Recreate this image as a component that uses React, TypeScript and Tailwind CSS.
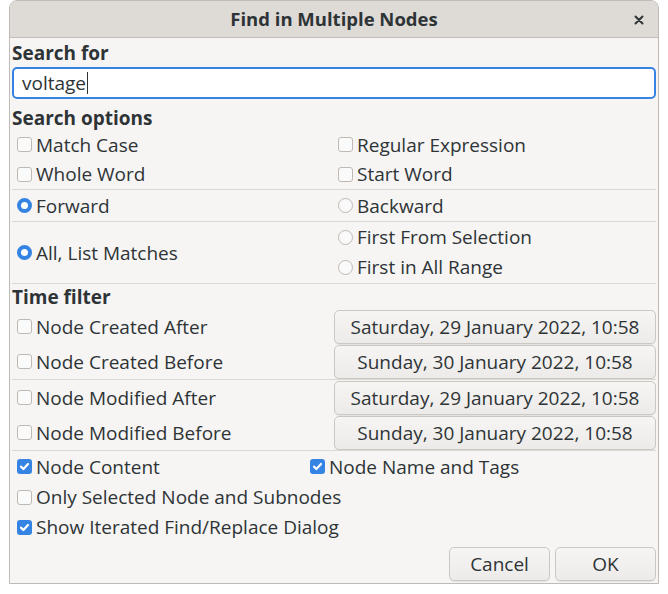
import React from 'react';

const font = { fontFamily: "'Open Sans', 'Noto Sans', sans-serif" };

function Check({ checked = false }: { checked?: boolean }) {
  if (checked) {
    return (
      <span className="flex h-[15px] w-[15px] shrink-0 items-center justify-center rounded-[3px] bg-[#3584e4]">
        <svg width="11" height="11" viewBox="0 0 11 11">
          <path d="M2 5.6 L4.4 8 L9 3" fill="none" stroke="white" strokeWidth="2.2" strokeLinecap="round" strokeLinejoin="round" />
        </svg>
      </span>
    );
  }
  return <span className="h-[15px] w-[15px] shrink-0 rounded-[3px] border border-[#bfb9b3] bg-[#fafafa]" />;
}

function Radio({ checked = false }: { checked?: boolean }) {
  if (checked) {
    return <span className="h-[15px] w-[15px] shrink-0 rounded-full border-[4px] border-[#3584e4] bg-white" />;
  }
  return <span className="h-[15px] w-[15px] shrink-0 rounded-full border border-[#bfb9b3] bg-[#fafafa]" />;
}

function Opt({ label, checked, radio }: { label: string; checked?: boolean; radio?: boolean }) {
  return (
    <div className="flex items-center gap-[4px]">
      {radio ? <Radio checked={checked} /> : <Check checked={checked} />}
      <span>{label}</span>
    </div>
  );
}

function Sep() {
  return <div className="h-px bg-[#dcd8d4]" />;
}

function DateBtn({ text }: { text: string }) {
  return (
    <button className="h-[34px] w-full rounded-[5px] border border-[#cdc7c2] bg-gradient-to-b from-[#f6f5f4] to-[#edebe9] text-[#2e3436] shadow-[0_1px_0_rgba(0,0,0,0.07)]">
      {text}
    </button>
  );
}

export default function App() {
  return (
    <div className="min-h-screen bg-white pl-[9px]" style={font}>
      <div className="flex h-[584px] w-[650px] flex-col overflow-hidden rounded-t-[8px] border border-[#c0bbb6] bg-[#f6f5f4] text-[19px] leading-[24px] text-[#2e3436]">
        {/* Title bar */}
        <div className="relative flex h-[37px] shrink-0 items-center justify-center border-b border-[#c3beb9] bg-[#dedbd7]">
          <span className="text-[18.5px] font-bold">Find in Multiple Nodes</span>
          <svg className="absolute right-[14px] top-[14px]" width="10" height="10" viewBox="0 0 10 10">
            <path d="M1.5 1.5 L8.5 8.5 M8.5 1.5 L1.5 8.5" stroke="#2e3436" strokeWidth="2" strokeLinecap="round" />
          </svg>
        </div>

        <div className="flex flex-1 flex-col px-[2px]">
          <div className="flex h-[29px] items-center pt-[1px] font-bold">Search for</div>
          <div className="flex h-[32px] items-center rounded-[5px] border-2 border-[#3584e4] bg-white pl-[8px]">
            <span>voltage</span>
            <span className="ml-px h-[22px] w-px bg-[#2e3436]" />
          </div>

          <div className="flex h-[31px] items-end pb-[0px] font-bold">Search options</div>
          <div className="grid grid-cols-2">
            <div className="flex h-[29px] items-center pl-[5px]"><Opt label="Match Case" /></div>
            <div className="flex h-[29px] items-center pl-[4px]"><Opt label="Regular Expression" /></div>
            <div className="flex h-[30px] items-center pl-[5px]"><Opt label="Whole Word" /></div>
            <div className="flex h-[30px] items-center pl-[4px]"><Opt label="Start Word" /></div>
          </div>
          <Sep />
          <div className="grid h-[31px] grid-cols-2">
            <div className="flex items-center pl-[5px]"><Opt radio checked label="Forward" /></div>
            <div className="flex items-center pl-[4px]"><Opt radio label="Backward" /></div>
          </div>
          <Sep />
          <div className="grid h-[61px] grid-cols-2">
            <div className="flex items-center pl-[5px]"><Opt radio checked label="All, List Matches" /></div>
            <div className="flex flex-col pl-[4px]">
              <div className="flex h-[30px] items-center"><Opt radio label="First From Selection" /></div>
              <div className="flex h-[30px] items-center"><Opt radio label="First in All Range" /></div>
            </div>
          </div>
          <Sep />

          <div className="flex h-[25px] items-center pt-[1px] font-bold">Time filter</div>
          <div className="grid grid-cols-2 items-center">
            <div className="flex h-[35px] items-center pl-[5px]"><Opt label="Node Created After" /></div>
            <DateBtn text="Saturday, 29 January 2022, 10:58" />
            <div className="flex h-[35px] items-center pl-[5px]"><Opt label="Node Created Before" /></div>
            <DateBtn text="Sunday, 30 January 2022, 10:58" />
          </div>
          <Sep />
          <div className="grid grid-cols-2 items-center">
            <div className="flex h-[35px] items-center pl-[5px]"><Opt label="Node Modified After" /></div>
            <DateBtn text="Saturday, 29 January 2022, 10:58" />
            <div className="flex h-[35px] items-center pl-[5px]"><Opt label="Node Modified Before" /></div>
            <DateBtn text="Sunday, 30 January 2022, 10:58" />
          </div>
          <Sep />

          <div className="flex h-[31px] items-center pl-[5px]">
            <div className="w-[293px]"><Opt checked label="Node Content" /></div>
            <Opt checked label="Node Name and Tags" />
          </div>
          <div className="flex h-[30px] items-center pl-[5px]"><Opt label="Only Selected Node and Subnodes" /></div>
          <div className="flex h-[30px] items-center pl-[5px]"><Opt checked label="Show Iterated Find/Replace Dialog" /></div>

          <div className="mt-auto flex justify-end gap-[5px] pb-[2px]">
            <button className="h-[34px] w-[101px] rounded-[5px] border border-[#cdc7c2] bg-gradient-to-b from-[#f6f5f4] to-[#edebe9] shadow-[0_1px_0_rgba(0,0,0,0.07)]">Cancel</button>
            <button className="h-[34px] w-[101px] rounded-[5px] border border-[#cdc7c2] bg-gradient-to-b from-[#f6f5f4] to-[#edebe9] shadow-[0_1px_0_rgba(0,0,0,0.07)]">OK</button>
          </div>
        </div>
      </div>
    </div>
  );
}
